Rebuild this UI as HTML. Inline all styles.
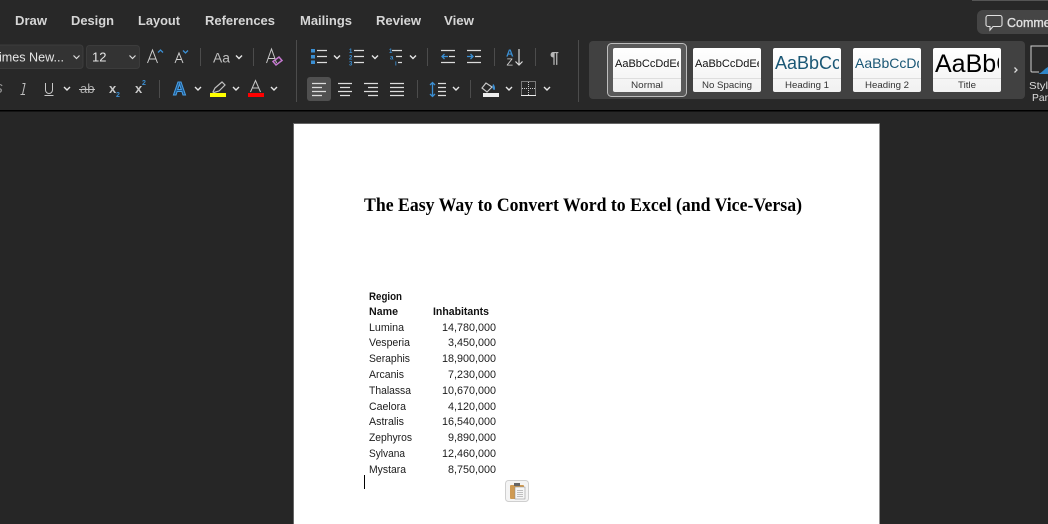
<!DOCTYPE html>
<html><head><meta charset="utf-8"><style>
html,body{margin:0;padding:0;background:#262626;width:1048px;height:524px;overflow:hidden}
svg{display:block;font-family:"Liberation Sans",sans-serif}
.tab{font-size:13px;font-weight:700;fill:#d6d6d6}
.l{stroke:#dcdcdc;stroke-width:1.2;fill:none}
.b{stroke:#3b8fd3;stroke-width:1.3;fill:none}
.c{stroke:#e6e6e6;stroke-width:1.4;fill:none}
.sep{stroke:#4c4c4c;stroke-width:1}
.t{font-size:11.4px;fill:#1c1c1c}
.tb{font-size:11.4px;font-weight:700;fill:#111}
.sn{font-size:9.2px;fill:#333}
</style></head><body>
<svg width="1048" height="524" viewBox="0 0 1048 524" xmlns="http://www.w3.org/2000/svg">
<defs>
<path id="ch" d="M0 0l3 3l3-3"/>
<linearGradient id="g" x1="0" y1="0" x2="0" y2="1"><stop offset="0" stop-color="#fff"/><stop offset="1" stop-color="#f1f1f1"/></linearGradient>
</defs>
<rect width="1048" height="110" fill="#282828"/>
<rect y="110" width="1048" height="1.5" fill="#000"/>
<rect y="111.500" width="1048" height="413" fill="#262626"/>

<text class="tab" x="15" y="25" textLength="32" lengthAdjust="spacingAndGlyphs">Draw</text>
<text class="tab" x="71" y="25" textLength="43" lengthAdjust="spacingAndGlyphs">Design</text>
<text class="tab" x="138" y="25" textLength="42" lengthAdjust="spacingAndGlyphs">Layout</text>
<text class="tab" x="205" y="25" textLength="70" lengthAdjust="spacingAndGlyphs">References</text>
<text class="tab" x="300" y="25" textLength="52" lengthAdjust="spacingAndGlyphs">Mailings</text>
<text class="tab" x="376" y="25" textLength="45" lengthAdjust="spacingAndGlyphs">Review</text>
<text class="tab" x="444" y="25" textLength="30" lengthAdjust="spacingAndGlyphs">View</text>

<rect x="977" y="10" width="90" height="24" rx="6" fill="#454545"/>
<path d="M988 15.500h12a2 2 0 0 1 2 2v7a2 2 0 0 1-2 2h-7l-3 3.500v-3.500h-2a2 2 0 0 1-2-2v-7a2 2 0 0 1 2-2z" fill="none" stroke="#e0e0e0" stroke-width="1.1"/>
<text x="1007" y="27" font-size="12.500" fill="#e0e0e0" stroke="#e0e0e0" stroke-width="0.35">Comment</text>
<rect x="972" y="0" width="76" height="1" fill="#555"/>

<!-- font boxes -->
<rect x="-10" y="45" width="93" height="23.500" rx="3" fill="#333" stroke="#3c3c3c"/>
<rect x="86.500" y="45.500" width="53" height="23" rx="3" fill="#333" stroke="#3c3c3c"/>
<text x="-1" y="61.500" font-size="13" fill="#e6e6e6" textLength="65" lengthAdjust="spacingAndGlyphs">imes New...</text>
<text x="92" y="61.500" font-size="13" fill="#e6e6e6">12</text>
<use href="#ch" x="73.500" y="55.500" class="l"/><use href="#ch" x="129.500" y="55.500" class="l"/>

<path d="M147.500 63l5-13l5 13M149.300 59h6.400" fill="none" stroke="#cfcfcf" stroke-width="1"/>
<path d="M158 52.500l2.500-2.500l2.500 2.500" class="b"/>
<path d="M175 63l4-10l4 10M176.500 59.500h5" fill="none" stroke="#cfcfcf" stroke-width="1"/>
<path d="M183 50.500l2.500 2.500l2.500-2.500" class="b"/>
<line class="sep" x1="200.500" y1="48" x2="200.500" y2="66"/>
<text x="213" y="62.500" font-size="13.500" fill="#bdbdbd" textLength="17" lengthAdjust="spacingAndGlyphs">Aa</text>
<use href="#ch" x="236" y="55.500" class="c"/>
<line class="sep" x1="253.500" y1="48" x2="253.500" y2="66"/>
<path d="M266.500 63l5-14l5 14M268.300 58.500h6.400" fill="none" stroke="#c8c8c8" stroke-width="1"/>
<path d="M273 61.500l6-4.500l3 3.500l-6 4.500z" fill="none" stroke="#c478cf" stroke-width="1.500"/>

<!-- row 2 left -->
<text x="-6" y="93" font-size="13" fill="#999" font-style="italic">S</text>
<path d="M24 83.500h-1.500M25.500 83.500h-3M21 94.500h4M25 83.500l-2.500 11M20.500 94.500h3" fill="none" stroke="#bfbfbf" stroke-width="1"/>
<path d="M45.500 83v7a3.500 3.500 0 0 0 7 0v-7M44.500 95.500h9" fill="none" stroke="#c8c8c8" stroke-width="1"/>
<use href="#ch" x="64" y="87" class="c"/>
<text x="80" y="93" font-size="13" fill="#b0b0b0">ab</text>
<line x1="79" y1="89.500" x2="95" y2="89.500" stroke="#c8c8c8"/>
<text x="109" y="93" font-size="13" font-weight="700" fill="#c8c8c8">x</text>
<text x="116" y="97" font-size="7" font-weight="700" fill="#3b8fd3">2</text>
<text x="135" y="93" font-size="13" font-weight="700" fill="#c8c8c8">x</text>
<text x="142" y="85" font-size="7" font-weight="700" fill="#3b8fd3">2</text>
<line class="sep" x1="159.500" y1="80" x2="159.500" y2="98"/>
<text x="173" y="95" font-size="18" font-weight="700" fill="#1d5c95" stroke="#4aa0e6" stroke-width="1">A</text>
<use href="#ch" x="195" y="87" class="c"/>
<path d="M213 92l2-4l7-6l3 3l-6 6l-5 1.500z" fill="none" stroke="#c0c0c0" stroke-width="1.200"/>
<rect x="210" y="93" width="16" height="4" fill="#ffff00"/>
<use href="#ch" x="233" y="87" class="c"/>
<path d="M250.500 92l5-11.500l5 11.500M252.300 88h6.400" fill="none" stroke="#c8c8c8" stroke-width="1"/>
<rect x="248" y="93" width="16" height="4" fill="#ff0000"/>
<use href="#ch" x="271" y="87" class="c"/>
<line class="sep" x1="296.500" y1="40" x2="296.500" y2="102"/>

<!-- bullets row -->
<g fill="#3b8fd3"><rect x="311" y="49" width="4" height="3.500"/><rect x="311" y="55" width="4" height="3.500"/><rect x="311" y="60.500" width="4" height="3.500"/></g>
<path class="l" d="M317 50.500h10M317 56.500h10M317 62.500h10"/>
<use href="#ch" x="334" y="55.500" class="c"/>
<g font-size="6" font-weight="700" fill="#3b8fd3"><text x="349" y="53">1</text><text x="349" y="59.500">2</text><text x="349" y="65.500">3</text></g>
<path class="l" d="M354 50.500h10M354 56.500h10M354 62.500h10"/>
<use href="#ch" x="372" y="55.500" class="c"/>
<g font-size="6" font-weight="700" fill="#3b8fd3"><text x="389" y="53">1</text><text x="390" y="59.500">a</text><text x="395" y="65.500">i</text></g>
<path class="l" d="M392 50.500h10M396 56.500h6M398 62.500h4"/>
<use href="#ch" x="410" y="55.500" class="c"/>
<line class="sep" x1="427.500" y1="48" x2="427.500" y2="66"/>
<path class="l" d="M441 50.500h14M449 56.500h6M441 62.500h14"/>
<path class="b" d="M448 56.500h-6M444.500 54l-2.500 2.500l2.500 2.500"/>
<path class="l" d="M467 50.500h14M475 56.500h6M467 62.500h14"/>
<path class="b" d="M467 56.500h6M470.500 54l2.500 2.500l-2.500 2.500"/>
<line class="sep" x1="494.500" y1="48" x2="494.500" y2="66"/>
<text x="506" y="56.500" font-size="10.500" font-weight="700" fill="#3b8fd3">A</text>
<text x="506.500" y="65.500" font-size="10.500" fill="#cfcfcf">Z</text>
<path class="l" d="M519 49v16M515.500 61.500l3.500 3.500l3.500-3.500"/>
<line class="sep" x1="535.500" y1="48" x2="535.500" y2="66"/>
<text x="550" y="63" font-size="16" font-weight="700" fill="#b8b8b8">¶</text>

<!-- row2 align -->
<rect x="307" y="77" width="24" height="24" rx="3" fill="#505050"/>
<path class="l" d="M312 83.500h14M312 87.500h10M312 91.500h14M312 95.500h10"/>
<path class="l" d="M338 83.500h14M340 87.500h10M338 91.500h14M340 95.500h10"/>
<path class="l" d="M364 83.500h14M368 87.500h10M364 91.500h14M368 95.500h10"/>
<path class="l" d="M390 83.500h14M390 87.500h14M390 91.500h14M390 95.500h14"/>
<line class="sep" x1="417.500" y1="80" x2="417.500" y2="98"/>
<path class="b" d="M432.500 83v13M430 85l2.500-2.500l2.500 2.500M430 94l2.500 2.500l2.500-2.500"/>
<path class="l" d="M438 83.500h8M438 87.500h8M438 91.500h8M438 95.500h8"/>
<use href="#ch" x="453" y="87" class="c"/>
<line class="sep" x1="470.500" y1="80" x2="470.500" y2="98"/>
<path d="M486 83l-4 5l5 4l5-5z" fill="none" stroke="#c8c8c8" stroke-width="1.200"/>
<path d="M493 84c2 1 2.500 5 1.500 6c-2 0-2.500-3-1.500-6z" fill="#3b8fd3"/>
<rect x="483" y="93" width="16" height="4" fill="#eee"/>
<use href="#ch" x="506" y="87" class="c"/>
<path d="M521.500 81.500h14v14h-14z" fill="none" stroke="#ccc" stroke-width="1" stroke-dasharray="1 1"/>
<path d="M528.500 82v14M522 88.500h14" fill="none" stroke="#ccc" stroke-width="1" stroke-dasharray="1 1"/>
<line x1="521" y1="95.500" x2="536" y2="95.500" stroke="#eee"/>
<use href="#ch" x="544" y="87" class="c"/>
<line class="sep" x1="578.500" y1="40" x2="578.500" y2="102"/>

<!-- style gallery -->
<rect x="589" y="41" width="436" height="58" rx="4" fill="#414141"/>
<rect x="607.500" y="43.500" width="79" height="53" rx="4" fill="#5a5a5a" stroke="#bdbdbd"/>
<g>
<rect x="613" y="48" width="68" height="44" rx="2" fill="url(#g)"/>
<rect x="693" y="48" width="68" height="44" rx="2" fill="url(#g)"/>
<rect x="773" y="48" width="68" height="44" rx="2" fill="url(#g)"/>
<rect x="853" y="48" width="68" height="44" rx="2" fill="url(#g)"/>
<rect x="933" y="48" width="68" height="44" rx="2" fill="url(#g)"/>
<g stroke="#dedede"><path d="M613 78.500h68M693 78.500h68M773 78.500h68M853 78.500h68M933 78.500h68"/></g>
</g>
<svg x="613" y="48" width="66" height="30"><text x="2" y="19" font-size="11" fill="#111">AaBbCcDdEe</text></svg>
<svg x="693" y="48" width="66" height="30"><text x="2" y="19" font-size="11" fill="#111">AaBbCcDdEe</text></svg>
<svg x="773" y="48" width="66" height="30"><text x="2" y="21" font-size="18" fill="#1a5775">AaBbCc</text></svg>
<svg x="853" y="48" width="66" height="30"><text x="2" y="20" font-size="14" fill="#1a5775">AaBbCcDd</text></svg>
<svg x="933" y="48" width="66" height="30"><text x="2" y="24" font-size="25" fill="#000">AaBbC</text></svg>
<text class="sn" x="631" y="88" textLength="32" lengthAdjust="spacingAndGlyphs">Normal</text>
<text class="sn" x="702" y="88" textLength="50" lengthAdjust="spacingAndGlyphs">No Spacing</text>
<text class="sn" x="785" y="88" textLength="44" lengthAdjust="spacingAndGlyphs">Heading 1</text>
<text class="sn" x="865" y="88" textLength="44" lengthAdjust="spacingAndGlyphs">Heading 2</text>
<text class="sn" x="958" y="88" textLength="18" lengthAdjust="spacingAndGlyphs">Title</text>
<path d="M1014.500 67.500l2.500 2.500l-2.500 2.500" fill="none" stroke="#ddd" stroke-width="1.300"/>

<path d="M1039 72h-7a1 1 0 0 1-1-1v-25h17" fill="none" stroke="#cfcfcf" stroke-width="1"/>
<path d="M1038 74c4-1 6-5 10-7v7z" fill="#2f86c9"/>
<text x="1029" y="89" font-size="10.500" fill="#dcdcdc" textLength="19" lengthAdjust="spacingAndGlyphs">Styl</text>
<text x="1032" y="101" font-size="10.500" fill="#dcdcdc" textLength="16" lengthAdjust="spacingAndGlyphs">Par</text>

<!-- page -->
<rect x="293.500" y="123.500" width="586" height="401" fill="#fff"/>
<path d="M293.500 524V123.500H880" fill="none" stroke="#666" stroke-width="1"/>
<text x="364" y="211" font-family="Liberation Serif" font-size="18.600" font-weight="700" fill="#000" textLength="438" lengthAdjust="spacingAndGlyphs" style="font-family:'Liberation Serif',serif">The Easy Way to Convert Word to Excel (and Vice-Versa)</text>

<g lengthAdjust="spacingAndGlyphs">
<text class="tb" x="369" y="300" textLength="33" lengthAdjust="spacingAndGlyphs">Region</text>
<text class="tb" x="369" y="315" textLength="29" lengthAdjust="spacingAndGlyphs">Name</text>
<text class="tb" x="433" y="315" textLength="56" lengthAdjust="spacingAndGlyphs">Inhabitants</text>
<text class="t" x="369" y="331" textLength="35" lengthAdjust="spacingAndGlyphs">Lumina</text><text class="t" x="442" y="331" textLength="54" lengthAdjust="spacingAndGlyphs">14,780,000</text>
<text class="t" x="369" y="346" textLength="41" lengthAdjust="spacingAndGlyphs">Vesperia</text><text class="t" x="448" y="346" textLength="48" lengthAdjust="spacingAndGlyphs">3,450,000</text>
<text class="t" x="369" y="362" textLength="41" lengthAdjust="spacingAndGlyphs">Seraphis</text><text class="t" x="442" y="362" textLength="54" lengthAdjust="spacingAndGlyphs">18,900,000</text>
<text class="t" x="369" y="378" textLength="35" lengthAdjust="spacingAndGlyphs">Arcanis</text><text class="t" x="448" y="378" textLength="48" lengthAdjust="spacingAndGlyphs">7,230,000</text>
<text class="t" x="369" y="394" textLength="42" lengthAdjust="spacingAndGlyphs">Thalassa</text><text class="t" x="442" y="394" textLength="54" lengthAdjust="spacingAndGlyphs">10,670,000</text>
<text class="t" x="369" y="410" textLength="37" lengthAdjust="spacingAndGlyphs">Caelora</text><text class="t" x="448" y="410" textLength="48" lengthAdjust="spacingAndGlyphs">4,120,000</text>
<text class="t" x="369" y="425" textLength="35" lengthAdjust="spacingAndGlyphs">Astralis</text><text class="t" x="442" y="425" textLength="54" lengthAdjust="spacingAndGlyphs">16,540,000</text>
<text class="t" x="369" y="441" textLength="43" lengthAdjust="spacingAndGlyphs">Zephyros</text><text class="t" x="448" y="441" textLength="48" lengthAdjust="spacingAndGlyphs">9,890,000</text>
<text class="t" x="369" y="457" textLength="36" lengthAdjust="spacingAndGlyphs">Sylvana</text><text class="t" x="442" y="457" textLength="54" lengthAdjust="spacingAndGlyphs">12,460,000</text>
<text class="t" x="369" y="473" textLength="37" lengthAdjust="spacingAndGlyphs">Mystara</text><text class="t" x="448" y="473" textLength="48" lengthAdjust="spacingAndGlyphs">8,750,000</text>
</g>
<rect x="364" y="475" width="1" height="14" fill="#000"/>

<rect x="505.500" y="480.500" width="23" height="21" rx="3" fill="#f4f4f4" stroke="#cfcfcf"/>
<rect x="510" y="485" width="14" height="14" rx="1" fill="#cf9a52"/>
<rect x="515" y="487" width="10" height="12" fill="#f6f6f6" stroke="#888" stroke-width="0.500"/>
<rect x="514" y="483" width="6" height="3" fill="#666"/>
<path d="M517 490.500h6M517 492.500h6M517 494.500h6M517 496.500h6" stroke="#888" stroke-width="0.600"/>
</svg>
</body></html>
